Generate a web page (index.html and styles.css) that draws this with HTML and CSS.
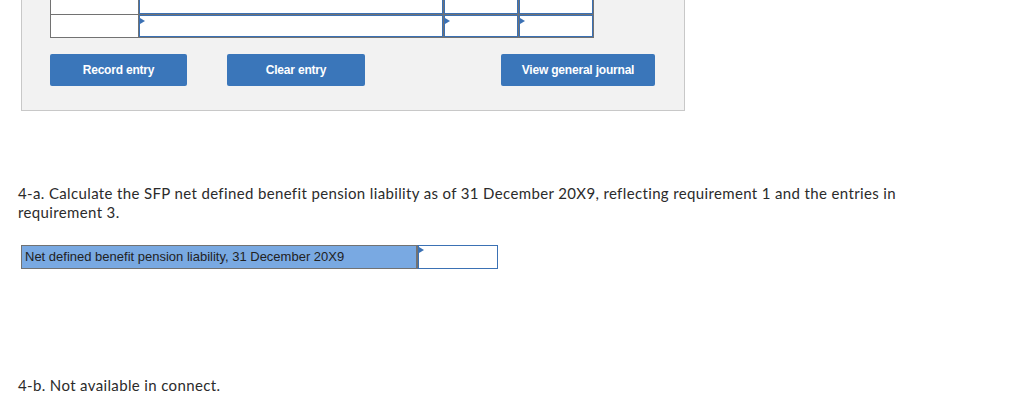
FILE: index.html
```html
<!DOCTYPE html>
<html>
<head>
<meta charset="utf-8">
<link rel="stylesheet" href="styles.css">
</head>
<body>
<div class="panel">
  <table class="journal">
    <tr>
      <td class="c1"></td>
      <td class="c2"><div class="inp"></div></td>
      <td class="c3"><div class="inp"></div></td>
      <td class="c4"><div class="inp"></div></td>
    </tr>
    <tr>
      <td class="c1"></td>
      <td class="c2"><div class="inp"><span class="mark"></span></div></td>
      <td class="c3"><div class="inp"><span class="mark"></span></div></td>
      <td class="c4"><div class="inp"><span class="mark"></span></div></td>
    </tr>
  </table>
  <div class="actions">
    <button class="btn btn-record">Record entry</button>
    <button class="btn btn-clear">Clear entry</button>
    <button class="btn btn-view">View general journal</button>
  </div>
</div>

<p class="question">4-a. Calculate the SFP net defined benefit pension liability as of 31 December 20X9, reflecting requirement 1 and the entries in requirement 3.</p>

<div class="answer-row">
  <div class="answer-label">Net defined benefit pension liability, 31 December 20X9</div>
  <div class="answer-input"><span class="mark"></span></div>
</div>

<p class="note">4-b. Not available in connect.</p>
</body>
</html>
```

FILE: styles.css
```css
html, body {
  margin: 0;
  padding: 0;
  background: #ffffff;
}
body {
  font-family: Lato, "Open Sans", "Liberation Sans", sans-serif;
  color: #2b2b2b;
}
.panel {
  margin: -10px 0 0 21px;
  width: 662px;
  background: #f2f2f2;
  border: 1px solid #c8c8c8;
  padding: 0 0 24px 0;
}
.journal {
  border-collapse: collapse;
  margin-left: 28px;
  background: #ffffff;
}
.journal td {
  border: 1px solid #727272;
  padding: 0;
  height: 22px;
}
.journal .c1 { width: 87px; }
.journal .c2 { width: 304px; }
.journal .c3 { width: 74px; }
.journal .c4 { width: 74px; }
.inp {
  position: relative;
  height: 20px;
  border: 1px solid #3b71b4;
  background: #ffffff;
}
.mark {
  position: absolute;
  left: 0;
  top: 2px;
  width: 0;
  height: 0;
  border-top: 3px solid transparent;
  border-bottom: 3px solid transparent;
  border-left: 5px solid #3b71b4;
}
.actions {
  display: flex;
  margin: 16px 0 0 28px;
}
.btn {
  height: 32px;
  border: none;
  border-radius: 2px;
  background: #3a76ba;
  color: #ffffff;
  font-family: "Liberation Sans", Arial, sans-serif;
  font-weight: bold;
  font-size: 12px;
  letter-spacing: -0.2px;
  padding: 0;
}
.btn-record { width: 137px; }
.btn-clear { width: 138px; margin-left: 40px; }
.btn-view { width: 154px; margin-left: 136px; }
.question {
  margin: 73px 0 0 18px;
  width: 900px;
  font-size: 15px;
  line-height: 19px;
  letter-spacing: 0.36px;
}
.answer-row {
  display: flex;
  margin: 23px 0 0 21px;
}
.answer-label {
  width: 391px;
  height: 22px;
  line-height: 22px;
  padding-left: 3px;
  background: #79a9e2;
  border: 1px solid #727272;
  font-family: "Liberation Sans", Arial, sans-serif;
  font-size: 13px;
  color: #222222;
}
.answer-input {
  position: relative;
  width: 79px;
  height: 22px;
  border: 1px solid #3b71b4;
  border-left: 1px solid #727272;
  background: #ffffff;
  box-shadow: inset 1px 0 0 #3b71b4;
}
.answer-input .mark {
  left: 1px;
  top: 1px;
}
.note {
  margin: 107px 0 0 18px;
  font-size: 15px;
  line-height: 19px;
  letter-spacing: 0.36px;
}
```
